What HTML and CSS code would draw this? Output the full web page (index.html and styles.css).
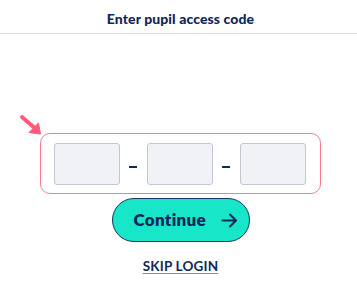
FILE: index.html
```html
<!DOCTYPE html>
<html lang="en">
<head>
<meta charset="utf-8">
<title>Enter pupil access code</title>
<link rel="stylesheet" href="styles.css">
</head>
<body>
<header class="top-bar">
  <h1 class="title">Enter pupil access code</h1>
</header>
<main class="content">
  <div class="code-box">
    <svg class="pointer" width="24" height="22" viewBox="0 0 24 22" aria-hidden="true">
      <line x1="3" y1="3" x2="14.5" y2="13" stroke="#ff5a7a" stroke-width="4" stroke-linecap="round"/>
      <polygon points="21.5,20 10,18.5 19.5,9" fill="#ff5a7a" stroke="#ff5a7a" stroke-width="1" stroke-linejoin="round"/>
    </svg>
    <input class="code-input" type="text" aria-label="Code part 1">
    <span class="dash"></span>
    <input class="code-input" type="text" aria-label="Code part 2">
    <span class="dash"></span>
    <input class="code-input" type="text" aria-label="Code part 3">
  </div>
  <button class="continue-btn" type="button">
    <span>Continue</span>
    <svg width="17" height="15" viewBox="0 0 17 15" aria-hidden="true">
      <path d="M1.5 7.5 H15 M9 1.5 L15 7.5 L9 13.5" fill="none" stroke="#10275a" stroke-width="2.1" stroke-linecap="round" stroke-linejoin="round"/>
    </svg>
  </button>
  <a class="skip-link" href="#">SKIP LOGIN</a>
</main>
</body>
</html>
```

FILE: styles.css
```css
html, body {
  margin: 0;
  padding: 0;
  background: #ffffff;
}

body {
  font-family: "Lato", "Noto Sans", sans-serif;
  color: #10275a;
  padding-left: 4px;
}

.top-bar {
  height: 33px;
  border-bottom: 1px solid #d6dde6;
  display: flex;
  justify-content: center;
  align-items: flex-start;
  margin-left: -4px;
  padding-left: 4px;
}

.title {
  margin: 0;
  padding-top: 10px;
  font-family: "Lato", sans-serif;
  font-size: 14px;
  line-height: 18px;
  font-weight: 900;
  color: #10275a;
  letter-spacing: 0.1px;
}

.content {
  display: flex;
  flex-direction: column;
  align-items: center;
  padding-top: 99px;
}

.code-box {
  position: relative;
  box-sizing: border-box;
  width: 281px;
  height: 61px;
  border: 1.5px solid #ff7a8e;
  border-radius: 10px;
  padding: 0 14px 0 12.5px;
  display: flex;
  align-items: center;
  justify-content: space-between;
}

.pointer {
  position: absolute;
  left: -22px;
  top: -20px;
}

.code-input {
  box-sizing: border-box;
  width: 66px;
  height: 42px;
  margin: 0;
  padding: 0;
  background: #f0f2f5;
  border: 1px solid #bfc8d5;
  border-radius: 3px;
  outline: none;
}

.dash {
  display: block;
  width: 8px;
  height: 2px;
  background: #10275a;
  margin-top: 6px;
}

.continue-btn {
  box-sizing: border-box;
  margin-top: 4px;
  width: 138px;
  height: 44px;
  border: 1px solid #1b3466;
  border-radius: 22px;
  background: #18e6c8;
  display: flex;
  align-items: center;
  justify-content: space-between;
  padding: 0 11px 0 21px;
  font-family: "Lato", sans-serif;
  font-size: 17px;
  font-weight: 800;
  color: #10275a;
  letter-spacing: 0.3px;
}

.continue-btn span {
  line-height: 20px;
}

.skip-link {
  margin-top: 16px;
  font-family: "Lato", sans-serif;
  font-size: 13.5px;
  font-weight: 700;
  color: #10275a;
  text-decoration: underline;
  text-decoration-color: #7d8fa8;
  text-decoration-thickness: 2px;
  text-underline-offset: 2px;
  letter-spacing: 0.2px;
}
```
